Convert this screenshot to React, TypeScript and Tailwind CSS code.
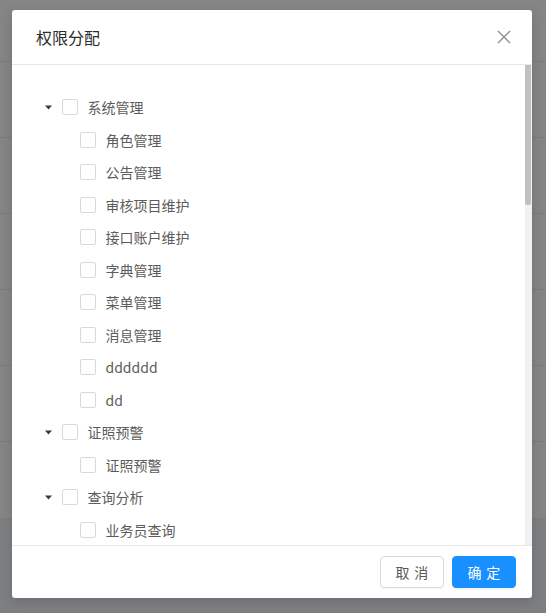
import React from "react";

type Node = { label: string; children?: Node[] };

const tree: Node[] = [
  {
    label: "系统管理",
    children: [
      { label: "角色管理" },
      { label: "公告管理" },
      { label: "审核项目维护" },
      { label: "接口账户维护" },
      { label: "字典管理" },
      { label: "菜单管理" },
      { label: "消息管理" },
      { label: "dddddd" },
      { label: "dd" },
    ],
  },
  { label: "证照预警", children: [{ label: "证照预警" }] },
  { label: "查询分析", children: [{ label: "业务员查询" }] },
];

function Caret() {
  return (
    <svg width="7" height="5" viewBox="0 0 7 5">
      <path d="M0 0.5 L7 0.5 L3.5 4.5 Z" fill="#3a3a3a" />
    </svg>
  );
}

function Row({ node, level }: { node: Node; level: number }) {
  return (
    <div className="flex h-[32.5px] items-center" style={{ paddingLeft: level * 18 }}>
      <div className="flex h-6 w-6 items-center justify-center">
        {node.children ? <Caret /> : null}
      </div>
      <div className="ml-[2px] h-4 w-4 shrink-0 rounded-[2px] border border-[#d9d9d9] bg-white" />
      <span className="ml-[9.5px] text-[14px] leading-6 text-[#5c5c5c]">{node.label}</span>
    </div>
  );
}

export default function App() {
  const rows: { node: Node; level: number }[] = [];
  tree.forEach((n) => {
    rows.push({ node: n, level: 0 });
    n.children?.forEach((c) => rows.push({ node: c, level: 1 }));
  });

  return (
    <div
      className="relative h-[613px] w-[546px] overflow-hidden bg-[#858585]"
      style={{ fontFamily: '"Noto Sans CJK SC", "Noto Sans", sans-serif' }}
    >
      {/* page behind the mask */}
      <div className="flex flex-col">
        <div className="h-[62px] border-b border-[#7b7b7b]" />
        <div className="h-[76px] border-b border-[#7b7b7b]" />
        <div className="h-[76px] border-b border-[#7b7b7b]" />
        <div className="h-[76px] border-b border-[#7b7b7b]" />
        <div className="h-[76px] border-b border-[#7b7b7b]" />
        <div className="h-[76px] border-b border-[#7b7b7b]" />
        <div className="h-[76px]" />
        <div className="h-[100px] bg-[#7e7f82]" />
      </div>

      {/* modal */}
      <div className="absolute left-[12px] top-[10px] flex h-[588px] w-[520px] flex-col rounded-[3px] bg-white shadow-[0_4px_12px_rgba(0,0,0,0.15)]">
        <div className="flex h-[55px] shrink-0 items-center justify-between border-b border-[#e8e8e8] pl-6 pr-[21px]">
          <span className="text-[16px] leading-[22px] text-[#2b2b2b]">权限分配</span>
          <svg width="14" height="14" viewBox="0 0 14 14">
            <path d="M1 1 L13 13 M13 1 L1 13" stroke="#8c8c8c" strokeWidth="1.3" fill="none" />
          </svg>
        </div>

        <div className="flex min-h-0 flex-1">
          <div className="min-w-0 flex-1 overflow-hidden pl-6 pt-[26px]">
            {rows.map((r, i) => (
              <Row key={i} node={r.node} level={r.level} />
            ))}
          </div>
          <div className="w-[7px] shrink-0 bg-[#f1f1f1]">
            <div className="h-[140px] w-[6px] rounded-b-[2px] bg-[#c1c1c1]" />
          </div>
        </div>

        <div className="flex h-[53px] shrink-0 items-center justify-end gap-2 border-t border-[#e8e8e8] px-4">
          <button className="flex h-8 w-16 items-center justify-center rounded-[4px] border border-[#d9d9d9] bg-white text-[14px] text-[#595959] shadow-[0_2px_0_rgba(0,0,0,0.015)]">
            <span className="mr-[-0.34em] tracking-[0.34em]">取消</span>
          </button>
          <button className="flex h-8 w-16 items-center justify-center rounded-[4px] border border-[#1890ff] bg-[#1890ff] text-[14px] text-white shadow-[0_2px_0_rgba(0,0,0,0.045)]">
            <span className="mr-[-0.34em] tracking-[0.34em]">确定</span>
          </button>
        </div>
      </div>
    </div>
  );
}
